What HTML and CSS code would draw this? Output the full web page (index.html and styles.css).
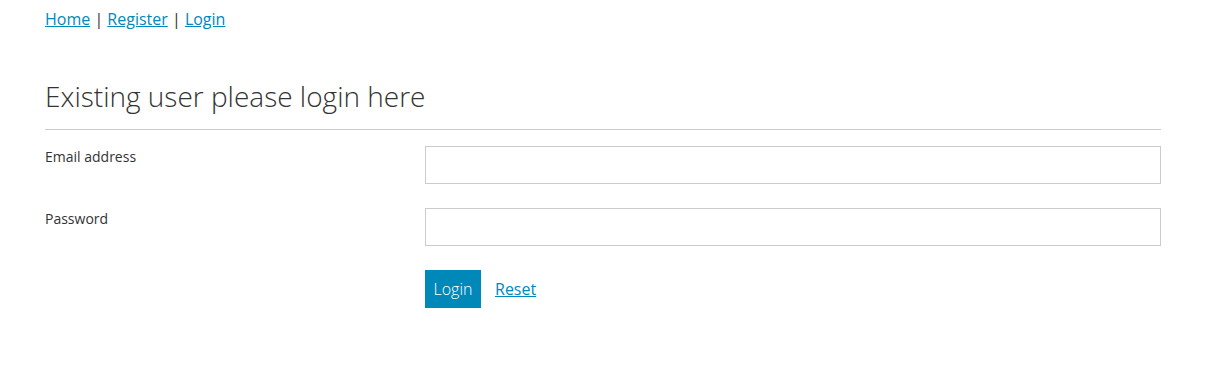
FILE: index.html
```html
<!DOCTYPE html>
<html>
<head>
<meta charset="utf-8">
<link rel="stylesheet" href="styles.css">
</head>
<body>
<div class="page">
  <nav class="nav">
    <a href="#">Home</a> <span class="sep">|</span> <a href="#">Register</a> <span class="sep">|</span> <a href="#">Login</a>
  </nav>
  <h1 class="title">Existing user please login here</h1>
  <form class="form">
    <div class="row">
      <label class="label">Email address</label>
      <input class="field" type="text">
    </div>
    <div class="row">
      <label class="label">Password</label>
      <input class="field" type="password">
    </div>
    <div class="row">
      <span></span>
      <div class="actions">
        <button class="btn" type="button">Login</button>
        <a href="#" class="reset">Reset</a>
      </div>
    </div>
  </form>
</div>
</body>
</html>
```
FILE: styles.css
```css
html, body {
  margin: 0;
  padding: 0;
  background: #fff;
}
body {
  font-family: "Open Sans", "Liberation Sans", sans-serif;
  color: #333;
}
.page {
  width: 1116px;
  padding: 8px 0 0 45px;
}
.nav {
  font-size: 16px;
  line-height: 22px;
  color: #333;
}
.nav a, .reset {
  color: #0088bb;
  text-decoration: underline;
}
.sep {
  color: #333;
}
.title {
  margin: 46px 0 0 0;
  font-size: 28px;
  font-weight: 300;
  line-height: 40px;
  color: #333;
  padding-bottom: 13px;
  border-bottom: 1px solid #ccc;
}
.form {
  margin-top: 16px;
}
.row {
  display: grid;
  grid-template-columns: 380px 736px;
  margin-bottom: 24px;
}
.label {
  font-size: 14px;
  line-height: 20px;
  padding-top: 1px;
}
.field {
  box-sizing: border-box;
  height: 38px;
  width: 736px;
  border: 1px solid #ccc;
  margin: 0;
  padding: 6px 10px;
  font-family: inherit;
  font-size: 14px;
}
.actions {
  display: flex;
  align-items: center;
  gap: 14px;
}
.btn {
  height: 38px;
  width: 56px;
  background: #0088b8;
  color: #fff;
  border: 0;
  margin: 0;
  padding: 0;
  font-family: inherit;
  font-size: 16px;
  font-weight: 300;
}
.reset {
  font-size: 16px;
}
```
